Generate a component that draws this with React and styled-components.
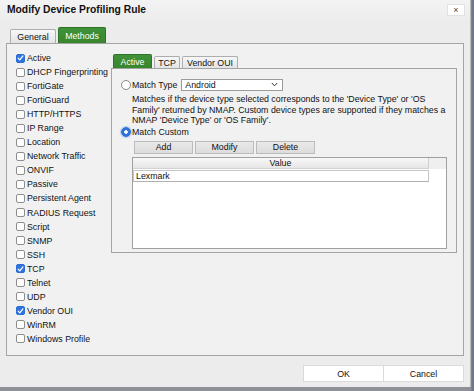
import React from "react";
import styled, { createGlobalStyle } from "styled-components";

const methods = [
  { name: "Active", checked: true },
  { name: "DHCP Fingerprinting" },
  { name: "FortiGate" },
  { name: "FortiGuard" },
  { name: "HTTP/HTTPS" },
  { name: "IP Range" },
  { name: "Location" },
  { name: "Network Traffic" },
  { name: "ONVIF" },
  { name: "Passive" },
  { name: "Persistent Agent" },
  { name: "RADIUS Request" },
  { name: "Script" },
  { name: "SNMP" },
  { name: "SSH" },
  { name: "TCP", checked: true },
  { name: "Telnet" },
  { name: "UDP" },
  { name: "Vendor OUI", checked: true },
  { name: "WinRM" },
  { name: "Windows Profile" },
];

function CheckMark() {
  return (
    <svg width="8" height="8" viewBox="0 0 8 8">
      <path d="M1.3 4.2 L3.2 6.1 L6.8 1.6" fill="none" stroke="#fff" strokeWidth="1.4" strokeLinecap="round" strokeLinejoin="round" />
    </svg>
  );
}

function Chevron() {
  return (
    <svg width="7" height="5" viewBox="0 0 7 5">
      <path d="M0.8 1 L3.5 3.8 L6.2 1" fill="none" stroke="#333" strokeWidth="1" />
    </svg>
  );
}

export default function App() {
  return (
    <Screen>
      <GlobalStyle />
      <Dialog>
        <TitleBar>
          <Title>Modify Device Profiling Rule</Title>
          <CloseButton>×</CloseButton>
        </TitleBar>

        <Content>
          <TabRow $indent={4} $height={16}>
            <Tab $w={46} $h={14}>General</Tab>
            <Tab $w={48} $h={16} $active>Methods</Tab>
          </TabRow>

          <OuterPanel>
            <MethodList>
              {methods.map((m) => (
                <MethodRow key={m.name}>
                  <CheckBox $checked={m.checked}>{m.checked && <CheckMark />}</CheckBox>
                  {m.name}
                </MethodRow>
              ))}
            </MethodList>

            <RightColumn>
              <TabRow $indent={2} $height={14}>
                <Tab $w={39} $h={14} $active>Active</Tab>
                <Tab $w={26} $h={12}>TCP</Tab>
                <Tab $w={56} $h={12}>Vendor OUI</Tab>
              </TabRow>

              <InnerPanel>
                <OptionRow>
                  <Radio />
                  <OptionLabel>Match Type</OptionLabel>
                  <Select>
                    Android
                    <Chevron />
                  </Select>
                </OptionRow>
                <Description>
                  Matches if the device type selected corresponds to the 'Device Type' or 'OS
                  <br />
                  Family' returned by NMAP. Custom device types are supported if they matches a
                  <br />
                  NMAP 'Device Type' or 'OS Family'.
                </Description>

                <OptionRow>
                  <Radio $checked />
                  <OptionLabel>Match Custom</OptionLabel>
                </OptionRow>

                <ButtonRow>
                  <ToolButton>Add</ToolButton>
                  <ToolButton>Modify</ToolButton>
                  <ToolButton>Delete</ToolButton>
                </ButtonRow>

                <ValueTable>
                  <TableHead>
                    <HeadCell>Value</HeadCell>
                    <HeadFiller />
                  </TableHead>
                  <ValueRow>Lexmark</ValueRow>
                </ValueTable>
              </InnerPanel>
            </RightColumn>
          </OuterPanel>
        </Content>

        <Footer>
          <DialogButton>OK</DialogButton>
          <DialogButton>Cancel</DialogButton>
        </Footer>
      </Dialog>
    </Screen>
  );
}

/* =============================== */
// styles

const GlobalStyle = createGlobalStyle`
  html, body {
    margin: 0;
    padding: 0;
  }

  body {
    background: #8d9097;
    font-family: "Liberation Sans", Arial, sans-serif;
    color: #111;
  }
`;

const Screen = styled.div`
  width: 474px;
  height: 391px;
  background: linear-gradient(to right, #8d9097 0, #8d9097 471px, #6f7788 472px);
  overflow: hidden;
`;

const Dialog = styled.div`
  width: 471px;
  height: 387px;
  box-sizing: border-box;
  border-right: 1px solid #b9b9b9;
  background: #ececec;
  display: flex;
  flex-direction: column;
`;

const TitleBar = styled.div`
  height: 19px;
  padding: 0 5px 0 7px;
  display: flex;
  align-items: center;
  justify-content: space-between;
  background: linear-gradient(#f3f3f3, #ededed);
`;

const Title = styled.div`
  font-size: 10.3px;
  font-weight: 700;
  color: #111;
`;

const CloseButton = styled.div`
  width: 16px;
  height: 10px;
  background: #fff;
  border: 1px solid #e2e2e2;
  font-size: 9px;
  line-height: 10px;
  text-align: center;
  color: #444;
`;

const Content = styled.div`
  padding: 8px 0 0 6px;
`;

const TabRow = styled.div`
  height: ${(p) => p.$height}px;
  display: flex;
  align-items: flex-end;
  gap: 2px;
  padding-left: ${(p) => p.$indent}px;
`;

const Tab = styled.div`
  width: ${(p) => p.$w}px;
  height: ${(p) => p.$h}px;
  box-sizing: border-box;
  display: flex;
  align-items: center;
  justify-content: center;
  font-size: 8.8px;
  border: 1px solid ${(p) => (p.$active ? "#2f7424" : "#adadad")};
  border-bottom: none;
  border-radius: 2px 2px 0 0;
  color: ${(p) => (p.$active ? "#fff" : "#111")};
  background: ${(p) =>
    p.$active ? "linear-gradient(#40923a, #38862c)" : "linear-gradient(#f7f7f7, #e4e4e4)"};
`;

const OuterPanel = styled.div`
  width: 458px;
  height: 313px;
  box-sizing: border-box;
  border: 1px solid #a4a4a4;
  background: #f1f1f1;
  display: flex;
  padding: 7px 0 0 9px;
`;

const MethodList = styled.div`
  width: 95px;
  display: flex;
  flex-direction: column;
`;

const MethodRow = styled.div`
  height: 14.05px;
  display: flex;
  align-items: center;
  gap: 2px;
  font-size: 8.8px;
  white-space: nowrap;
`;

const CheckBox = styled.span`
  width: 9px;
  height: 9px;
  flex: none;
  box-sizing: border-box;
  border-radius: 2px;
  border: 1px solid ${(p) => (p.$checked ? "#2a6dd4" : "#8e8e8e")};
  background: ${(p) => (p.$checked ? "#2f73db" : "#fff")};
  display: flex;
  align-items: center;
  justify-content: center;
`;

const RightColumn = styled.div`
  display: flex;
  flex-direction: column;
  padding-top: 3px;
`;

const InnerPanel = styled.div`
  width: 346px;
  height: 185px;
  box-sizing: border-box;
  border: 1px solid #a4a4a4;
  padding: 9px 0 0 9px;
  display: flex;
  flex-direction: column;
`;

const OptionRow = styled.div`
  height: 13px;
  display: flex;
  align-items: center;
  font-size: 8.8px;
`;

const Radio = styled.span`
  width: 10px;
  height: 10px;
  flex: none;
  box-sizing: border-box;
  border-radius: 50%;
  border: 1px solid ${(p) => (p.$checked ? "#2a6dd4" : "#8a8a8a")};
  background: ${(p) =>
    p.$checked ? "radial-gradient(circle, #fff 0 1.5px, #2f73db 2px)" : "#fff"};
  box-shadow: ${(p) => (p.$checked ? "0 0 1px 1px rgba(80,140,230,0.35)" : "none")};
`;

const OptionLabel = styled.span`
  margin-left: 1px;
`;

const Select = styled.div`
  margin-left: 4px;
  width: 102px;
  height: 12px;
  box-sizing: border-box;
  border: 1px solid #9b9b9b;
  background: #fff;
  padding: 0 4px 0 3px;
  display: flex;
  align-items: center;
  justify-content: space-between;
  font-size: 8.8px;
`;

const Description = styled.div`
  margin: 3px 0 0 11px;
  font-size: 8.8px;
  line-height: 10.5px;
  white-space: nowrap;
`;

const ButtonRow = styled.div`
  margin: 2px 0 0 13px;
  display: flex;
  gap: 2px;
`;

const ToolButton = styled.div`
  width: 59px;
  height: 13px;
  box-sizing: border-box;
  border: 1px solid #bcbcbc;
  background: linear-gradient(#e9e9e9, #dcdcdc);
  font-size: 8.8px;
  display: flex;
  align-items: center;
  justify-content: center;
`;

const ValueTable = styled.div`
  margin: 3px 0 0 11px;
  width: 315px;
  height: 92px;
  box-sizing: border-box;
  border: 1px solid #a0a0a0;
  background: #fff;
`;

const TableHead = styled.div`
  height: 11px;
  display: flex;
`;

const HeadCell = styled.div`
  width: 296px;
  box-sizing: border-box;
  border-right: 1px solid #d0d0d0;
  border-bottom: 1px solid #d2d2d2;
  background: linear-gradient(#f8f8f8, #e6e6e6);
  font-size: 8.8px;
  line-height: 10px;
  text-align: center;
`;

const HeadFiller = styled.div`
  flex: 1;
  background: #efefef;
`;

const ValueRow = styled.div`
  margin-top: 1px;
  width: 296px;
  height: 12px;
  box-sizing: border-box;
  border: 1px solid #c4c4c4;
  border-bottom-color: #b0b0b0;
  padding-left: 2px;
  font-size: 8.8px;
  line-height: 10px;
`;

const Footer = styled.div`
  padding: 9px 6px 0 0;
  display: flex;
  justify-content: flex-end;
`;

const DialogButton = styled.div`
  width: 81px;
  height: 17px;
  box-sizing: border-box;
  border: 1px solid #dadada;
  background: #fff;
  font-size: 8.8px;
  display: flex;
  align-items: center;
  justify-content: center;

  & + & {
    margin-left: -1px;
  }
`;
